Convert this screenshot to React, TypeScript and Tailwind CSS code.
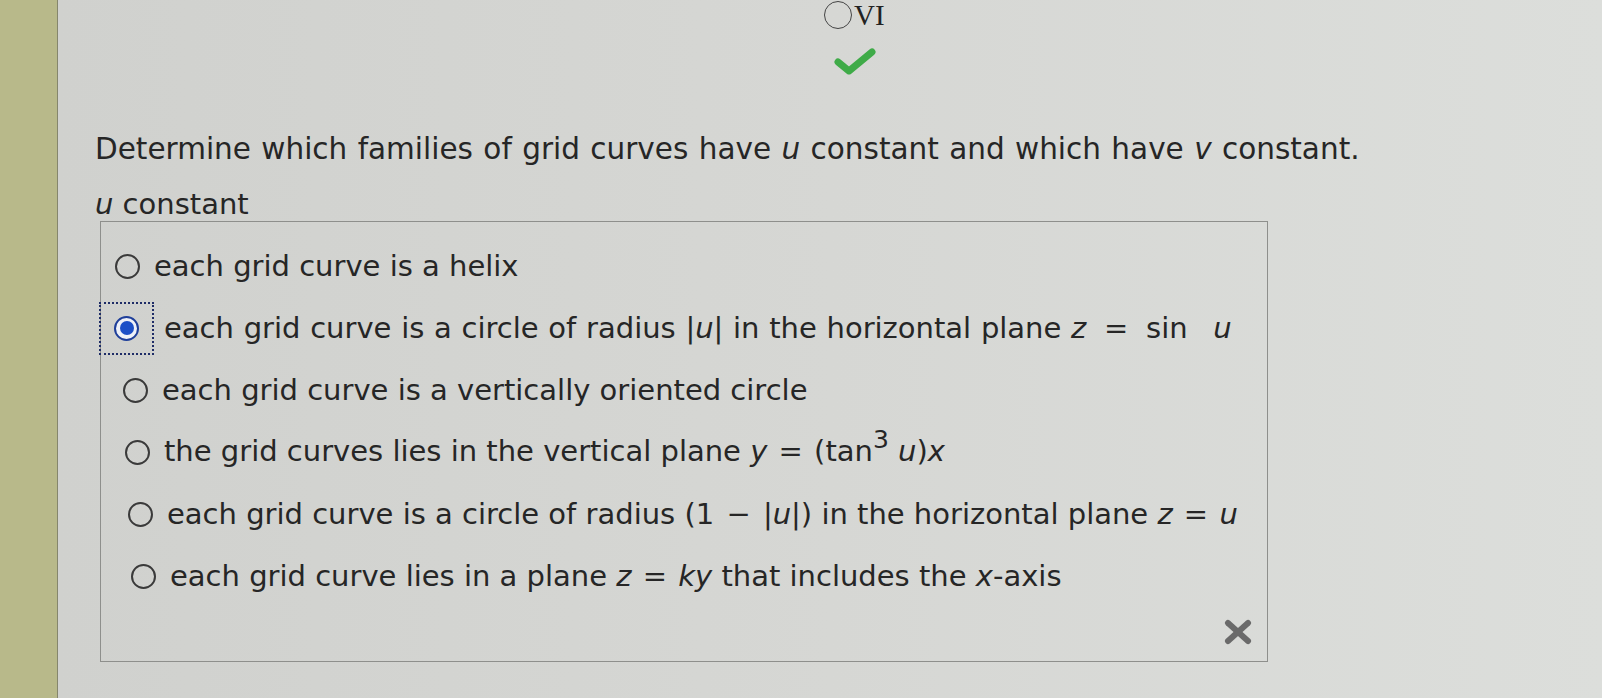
import React from "react";

function Radio({ selected = false }: { selected?: boolean }) {
  if (selected) {
    return (
      <div className="flex h-[25px] w-[25px] shrink-0 items-center justify-center rounded-full border-2 border-[#1f3f9a] bg-[#eef1f8]">
        <div className="h-[14px] w-[14px] rounded-full bg-[#1c4fc7]" />
      </div>
    );
  }
  return <div className="h-[25px] w-[25px] shrink-0 rounded-full border-2 border-[#3a3a3a]" />;
}

function Row({ pad, children }: { pad: string; children: React.ReactNode }) {
  return (
    <div className={`flex h-[62px] items-center ${pad}`}>
      <Radio />
      <div className="ml-[14px] whitespace-nowrap">{children}</div>
    </div>
  );
}

function Eq({ wide = false }: { wide?: boolean }) {
  return <span className={wide ? "mx-[8px]" : "mx-[2px]"}>=</span>;
}

export default function App() {
  return (
    <div
      className="flex h-[698px] w-[1602px] overflow-hidden text-[#262626]"
      style={{ fontFamily: '"DejaVu Sans", Verdana, sans-serif' }}
    >
      <div className="w-[58px] shrink-0 border-r border-[#85866c] bg-[#b8b98a]" />
      <div className="flex flex-1 flex-col bg-gradient-to-r from-[#d0d1ce] via-[#d6d7d4] to-[#dcdedb] pl-[37px]">
        {/* top status */}
        <div className="ml-[729px] flex h-[30px] items-center">
          <div className="h-[28px] w-[28px] rounded-full border-[1.5px] border-[#444]" />
          <span
            className="ml-[2px] text-[29px] leading-[30px] text-[#222]"
            style={{ fontFamily: '"Liberation Serif", "Times New Roman", serif' }}
          >
            VI
          </span>
        </div>
        <div className="ml-[739px] mt-[17px]">
          <svg width="42" height="28" viewBox="0 0 42 28">
            <polyline
              points="4,15 15,24 38,5"
              fill="none"
              stroke="#3fab48"
              strokeWidth="7"
              strokeLinecap="round"
              strokeLinejoin="round"
            />
          </svg>
        </div>

        <div className="mt-[57px] whitespace-nowrap text-[29.5px] leading-[34px] [word-spacing:1px]">
          Determine which families of grid curves have <i>u</i> constant and which have <i>v</i> constant.
        </div>
        <div className="mt-[21px] text-[29px] leading-[34px]">
          <i>u</i> constant
        </div>

        <div className="ml-[5px] mt-[0px] w-[1168px] border border-[#8e8f8c] pt-[13px] pb-[16px] text-[29px] leading-[34px]">
          <Row pad="pl-[14px]">each grid curve is a helix</Row>

          <div className="flex h-[62px] items-center">
            <div className="-ml-[2px] border-2 border-dotted border-[#1e2c66] px-[13px] py-[12px]">
              <Radio selected />
            </div>
            <div className="ml-[10px] whitespace-nowrap [word-spacing:0.5px]">
              each grid curve is a circle of radius |<i>u</i>| in the horizontal plane <i>z</i>{" "}
              <Eq wide />{" "}
              {"sin "}
              <i className="ml-[16px]">u</i>
            </div>
          </div>

          <Row pad="pl-[22px]">each grid curve is a vertically oriented circle</Row>
          <Row pad="pl-[24px]">
            the grid curves lies in the vertical plane <i>y</i> <Eq /> (tan
            <span className="relative -top-[13px] text-[25px]">3</span> <i>u</i>)<i>x</i>
          </Row>
          <Row pad="pl-[27px]">
            each grid curve is a circle of radius (1 <span className="mx-[3px]">−</span> |<i>u</i>|) in
            the horizontal plane <i>z</i> <Eq /> <i>u</i>
          </Row>
          <Row pad="pl-[30px]">
            each grid curve lies in a plane <i>z</i> <Eq /> <i>ky</i> that includes the <i>x</i>-axis
          </Row>

          <div className="mt-[12px] flex justify-end pr-[14px]">
            <svg width="30" height="26" viewBox="0 0 30 26">
              <line x1="5" y1="4" x2="25" y2="22" stroke="#6a6a6a" strokeWidth="6" strokeLinecap="round" />
              <line x1="25" y1="4" x2="5" y2="22" stroke="#6a6a6a" strokeWidth="6" strokeLinecap="round" />
            </svg>
          </div>
        </div>
      </div>
    </div>
  );
}
